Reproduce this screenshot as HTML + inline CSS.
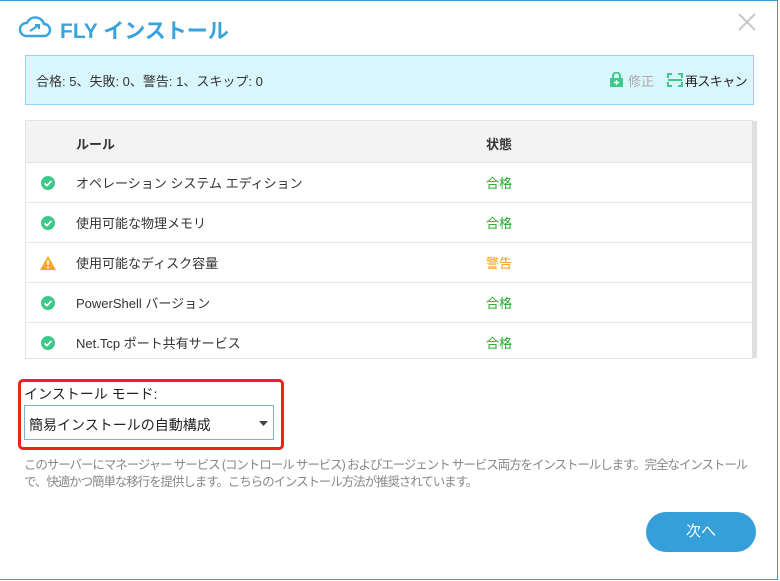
<!DOCTYPE html>
<html><head><meta charset="utf-8"><style>
*{margin:0;padding:0;box-sizing:border-box}
body{width:780px;height:581px;background:#fff;font-family:"Liberation Sans","Noto Sans CJK JP",sans-serif;position:relative;overflow:hidden;color:#333}
.win{position:absolute;left:0;top:0;width:778px;height:580px;border:1px solid #3a9ad9;border-left:none;border-top:1px solid #3a9ad9}
.a{position:absolute}
.title{left:60px;top:15px;font-size:21px;font-weight:bold;color:#3aa3dc}
.info{left:25px;top:55px;width:729px;height:50px;background:#daf6fd;border:1px solid #8fd8f5;font-size:13px}
.tbl{left:25px;top:120px;width:728px;height:239px;border:1px solid #e3e3e3;border-right:none}
.hdr{height:42px;background:#f3f3f3;border-bottom:1px solid #e3e3e3;font-size:13px;font-weight:bold;position:relative}
.row{height:40px;border-bottom:1px solid #e6e6e6;position:relative;font-size:13px}
.row span{position:absolute;top:10px}
.ok{color:#22a52a}.wn{color:#f39c12}
.chk{position:absolute;left:15px;top:13px;width:14px;height:14px}
</style></head><body>
<div class="win"></div>
<svg class="a" style="left:18px;top:15px" width="34" height="24" viewBox="0 0 34 24"><path d="M8 21h18a6 6 0 0 0 0-12 9 9 0 0 0-17-1A6.5 6.5 0 0 0 8 21z" fill="none" stroke="#3aa3dc" stroke-width="2.4"/><path d="M12 16l9-6M17 10h4v4" fill="none" stroke="#3aa3dc" stroke-width="2"/></svg>
<div class="a title">FLY インストール</div>
<svg class="a" style="left:738px;top:13px" width="18" height="18"><path d="M1 1L17 17M17 1L1 17" stroke="#c8c8c8" stroke-width="2"/></svg>
<div class="a info"><span class="a" style="left:10px;top:15px">合格: 5、失敗: 0、警告: 1、スキップ: 0</span>
<svg class="a" style="left:584px;top:16px" width="13" height="15"><path d="M3 6V4a3.5 3.5 0 0 1 7 0v2" fill="none" stroke="#3ec889" stroke-width="2"/><rect x="0" y="6" width="13" height="9" fill="#3ec889"/><path d="M6.5 8v5M4 10.5h5" stroke="#fff" stroke-width="1.4"/></svg>
<span class="a" style="left:602px;top:15px;color:#aaa">修正</span>
<svg class="a" style="left:641px;top:17px" width="16" height="14"><path d="M1 5V1h4M11 1h4v4M1 9v4h4M11 13h4V9M1 7h14" fill="none" stroke="#3ec889" stroke-width="2"/></svg>
<span class="a" style="left:659px;top:15px;color:#222;font-size:13px;letter-spacing:-0.6px">再スキャン</span></div>
<div class="a tbl">
<div class="hdr"><span class="a" style="left:50px;top:13px">ルール</span><span class="a" style="left:460px;top:13px">状態</span></div>
<div class="row"><svg class="chk"><circle cx="7" cy="7" r="7" fill="#3ec889"/><path d="M3.5 7.2l2.4 2.4 4.6-4.6" fill="none" stroke="#fff" stroke-width="1.8"/></svg><span style="left:50px">オペレーション システム エディション</span><span class="ok" style="left:460px">合格</span></div>
<div class="row"><svg class="chk"><circle cx="7" cy="7" r="7" fill="#3ec889"/><path d="M3.5 7.2l2.4 2.4 4.6-4.6" fill="none" stroke="#fff" stroke-width="1.8"/></svg><span style="left:50px">使用可能な物理メモリ</span><span class="ok" style="left:460px">合格</span></div>
<div class="row"><svg class="a" style="left:14px;top:13px" width="16" height="14"><path d="M8 0L16 14H0z" fill="#f5a623"/><path d="M8 4v5M8 10.5v2" stroke="#fff" stroke-width="1.6"/></svg><span style="left:50px">使用可能なディスク容量</span><span class="wn" style="left:460px">警告</span></div>
<div class="row"><svg class="chk"><circle cx="7" cy="7" r="7" fill="#3ec889"/><path d="M3.5 7.2l2.4 2.4 4.6-4.6" fill="none" stroke="#fff" stroke-width="1.8"/></svg><span style="left:50px">PowerShell バージョン</span><span class="ok" style="left:460px">合格</span></div>
<div class="row" style="border:none"><svg class="chk"><circle cx="7" cy="7" r="7" fill="#3ec889"/><path d="M3.5 7.2l2.4 2.4 4.6-4.6" fill="none" stroke="#fff" stroke-width="1.8"/></svg><span style="left:50px">Net.Tcp ポート共有サービス</span><span class="ok" style="left:460px">合格</span></div>
</div>
<div class="a" style="left:752px;top:121px;width:5px;height:237px;background:#e0e0e0"></div>
<div class="a" style="left:18px;top:379px;width:266px;height:71px;border:3px solid #f0201a;border-radius:5px"></div>
<div class="a" style="left:24px;top:384px;font-size:14px;color:#222">インストール モード:</div>
<div class="a" style="left:24px;top:405px;width:250px;height:35px;border:1px solid #7ab4dc;background:#fff;font-size:14px;color:#222;padding:9px 0 0 4px">簡易インストールの自動構成
<svg class="a" style="left:234px;top:15px" width="9" height="5"><path d="M0 0h9L4.5 5z" fill="#444"/></svg></div>
<div class="a" style="left:24px;top:457px;font-size:12.5px;color:#888;line-height:17px;letter-spacing:-1.08px;white-space:nowrap">このサーバーにマネージャー サービス (コントロール サービス) およびエージェント サービス両方をインストールします。完全なインストール<br>で、快適かつ簡単な移行を提供します。こちらのインストール方法が推奨されています。</div>
<div class="a" style="left:646px;top:512px;width:110px;height:40px;border-radius:20px;background:#359fda;color:#fff;font-size:15px;text-align:center;line-height:40px">次へ</div>
</body></html>
